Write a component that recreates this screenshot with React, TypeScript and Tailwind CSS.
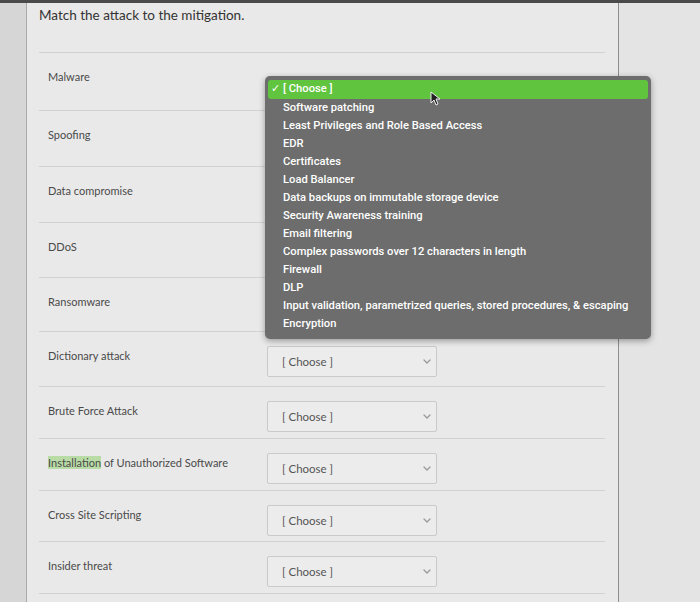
import React from "react";

const attacks = [
  "Malware",
  "Spoofing",
  "Data compromise",
  "DDoS",
  "Ransomware",
  "Dictionary attack",
  "Brute Force Attack",
  "Installation of Unauthorized Software",
  "Cross Site Scripting",
  "Insider threat",
];

// row heights differ a little, the screen was photographed at an angle
const rowHeights = ["h-[58px]", "h-[56px]", "h-[56px]", "h-[55px]", "h-[54px]", "h-[55px]", "h-[52px]", "h-[52px]", "h-[51px]", "h-[52px]"];

const options = [
  "Software patching",
  "Least Privileges and Role Based Access",
  "EDR",
  "Certificates",
  "Load Balancer",
  "Data backups on immutable storage device",
  "Security Awareness training",
  "Email filtering",
  "Complex passwords over 12 characters in length",
  "Firewall",
  "DLP",
  "Input validation, parametrized queries, stored procedures, & escaping",
  "Encryption",
];

function Chevron() {
  return (
    <svg width="8" height="5" viewBox="0 0 8 5" className="text-[#9a9a9a]">
      <path d="M1 1l3 3 3-3" fill="none" stroke="currentColor" strokeWidth="1.3" strokeLinecap="round" />
    </svg>
  );
}

function ChooseSelect({ hidden }: { hidden?: boolean }) {
  if (hidden) return <div className="h-[31px] w-[170px]" />;
  return (
    <div className="flex h-[31px] w-[170px] items-center justify-between rounded-[2px] border border-[#cacaca] bg-[#ececec] pl-[14px] pr-[5px]">
      <span className="text-[11.5px] text-[#555]">[ Choose ]</span>
      <Chevron />
    </div>
  );
}

function Label({ text }: { text: string }) {
  if (text.startsWith("Installation")) {
    return (
      <span>
        <span className="bg-[#b9dca6]">Installation</span> of Unauthorized Software
      </span>
    );
  }
  return <span>{text}</span>;
}

function Dropdown() {
  return (
    <div className="absolute left-[265px] top-[76px] h-[263px] w-[386px] rounded-[5px] bg-[#6c6d6c] pt-[4px] shadow-[0_2px_6px_rgba(0,0,0,0.35)] font-['Roboto',sans-serif] text-[11.2px] font-medium text-white">
      <div className="mx-[3px] flex h-[19px] items-center rounded-[3px] bg-[#60c43e]">
        <span className="w-[15px] pl-[3px] text-[11px]">✓</span>
        <span>[ Choose ]</span>
      </div>
      {options.map((o) => (
        <div key={o} className="flex h-[18px] items-center pl-[18px]">
          {o}
        </div>
      ))}
      {/* mouse cursor */}
      <svg className="absolute left-[165px] top-[15px]" width="11" height="15" viewBox="0 0 11 15">
        <path d="M1 1v11l3-3 2 5 2-1-2-5h4z" fill="#222" stroke="#eee" strokeWidth="1" />
      </svg>
    </div>
  );
}

export default function App() {
  return (
    <div className="relative h-[602px] w-[700px] overflow-hidden bg-[#e4e4e4] font-['Lato',sans-serif]">
      <div className="h-[3px] bg-[#4a4a4a]" />
      <div className="flex h-[599px]">
        <div className="w-[27px] border-r border-[#a9a9a9] bg-[#d6d6d6]" />
        <div className="w-[592px] border-r border-[#8f8f8f] bg-[#e9e9e9] pl-[12px]">
          <div className="h-[49px] pt-[2px] text-[13.5px] text-[#333]">Match the attack to the mitigation.</div>
          <div className="w-[566px] border-t border-[#d2d2d2]">
            {attacks.map((a, i) => (
              <div key={a} className={`flex ${rowHeights[i]} items-start border-b border-[#d2d2d2] pt-[14px]`}>
                <div className="w-[228px] pl-[9px] pt-[2px] text-[11px] text-[#4a4a4a]">
                  <Label text={a} />
                </div>
                <ChooseSelect hidden={i < 5} />
              </div>
            ))}
          </div>
        </div>
        <div className="flex-1" />
      </div>
      <Dropdown />
    </div>
  );
}
